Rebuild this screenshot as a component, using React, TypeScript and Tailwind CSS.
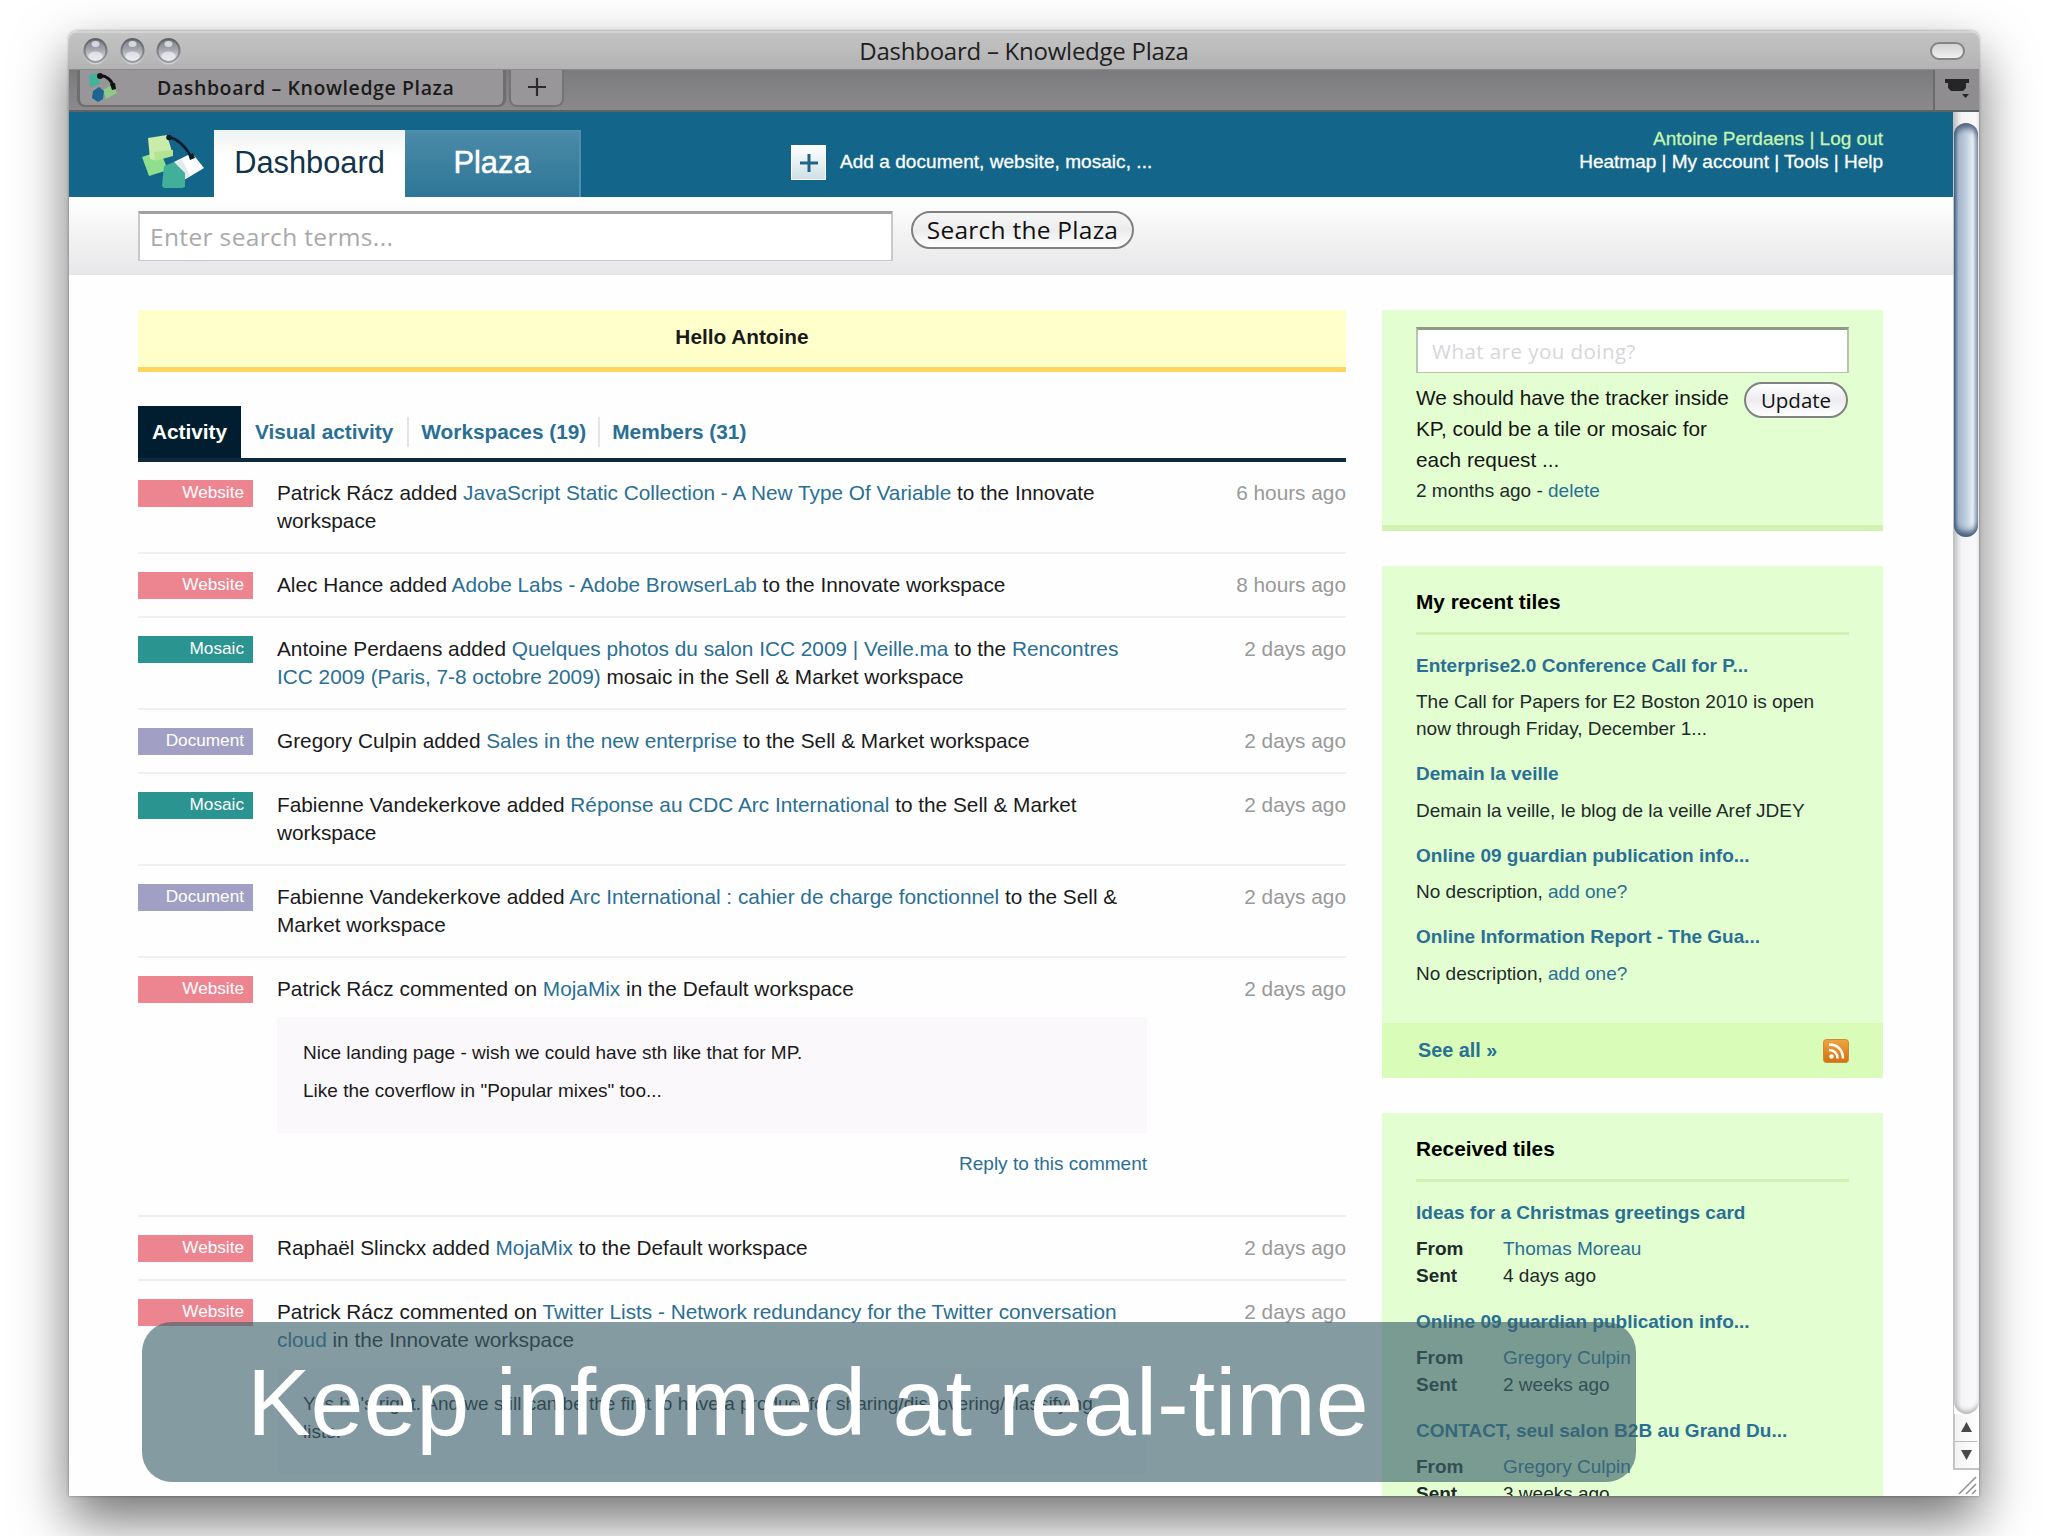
import type { ReactNode } from "react";

type Kind = "Website" | "Mosaic" | "Document";

const kindColors: Record<Kind, string> = {
  Website: "bg-[#ec8590]",
  Mosaic: "bg-[#2a9490]",
  Document: "bg-[#a19fc3]",
};

// Link in the main column and in the tiles
function A({ children }: { children: ReactNode }) {
  return <a className="text-[#2a6f94]">{children}</a>;
}

const activities: { kind: Kind; time: string; text: ReactNode; comment?: ReactNode; reply?: boolean }[] = [
  {
    kind: "Website",
    time: "6 hours ago",
    text: <>Patrick Rácz added <A>JavaScript Static Collection - A New Type Of Variable</A> to the Innovate workspace</>,
  },
  {
    kind: "Website",
    time: "8 hours ago",
    text: <>Alec Hance added <A>Adobe Labs - Adobe BrowserLab</A> to the Innovate workspace</>,
  },
  {
    kind: "Mosaic",
    time: "2 days ago",
    text: (
      <>
        Antoine Perdaens added <A>Quelques photos du salon ICC 2009 | Veille.ma</A> to the{" "}
        <A>Rencontres ICC 2009 (Paris, 7-8 octobre 2009)</A> mosaic in the Sell &amp; Market workspace
      </>
    ),
  },
  {
    kind: "Document",
    time: "2 days ago",
    text: <>Gregory Culpin added <A>Sales in the new enterprise</A> to the Sell &amp; Market workspace</>,
  },
  {
    kind: "Mosaic",
    time: "2 days ago",
    text: <>Fabienne Vandekerkove added <A>Réponse au CDC Arc International</A> to the Sell &amp; Market workspace</>,
  },
  {
    kind: "Document",
    time: "2 days ago",
    text: <>Fabienne Vandekerkove added <A>Arc International : cahier de charge fonctionnel</A> to the Sell &amp; Market workspace</>,
  },
  {
    kind: "Website",
    time: "2 days ago",
    text: <>Patrick Rácz commented on <A>MojaMix</A> in the Default workspace</>,
    comment: (
      <>
        <p>Nice landing page - wish we could have sth like that for MP.</p>
        <p className="mt-[10px]">Like the coverflow in "Popular mixes" too...</p>
      </>
    ),
    reply: true,
  },
  {
    kind: "Website",
    time: "2 days ago",
    text: <>Raphaël Slinckx added <A>MojaMix</A> to the Default workspace</>,
  },
  {
    kind: "Website",
    time: "2 days ago",
    text: <>Patrick Rácz commented on <A>Twitter Lists - Network redundancy for the Twitter conversation cloud</A> in the Innovate workspace</>,
    comment: <p>Yes he's right. And we still can be the first to have a product for sharing/discovering/classifying lists.</p>,
  },
];

const recentTiles = [
  { title: "Enterprise2.0 Conference Call for P...", body: "The Call for Papers for E2 Boston 2010 is open now through Friday, December 1..." },
  { title: "Demain la veille", body: "Demain la veille, le blog de la veille Aref JDEY" },
  { title: "Online 09 guardian publication info...", body: null },
  { title: "Online Information Report - The Gua...", body: null },
];

const receivedTiles = [
  { title: "Ideas for a Christmas greetings card", from: "Thomas Moreau", sent: "4 days ago" },
  { title: "Online 09 guardian publication info...", from: "Gregory Culpin", sent: "2 weeks ago" },
  { title: "CONTACT, seul salon B2B au Grand Du...", from: "Gregory Culpin", sent: "3 weeks ago" },
];

function Light() {
  return (
    <svg width="25" height="27" viewBox="0 0 25 27">
      <defs>
        <linearGradient id="light" x1="0" y1="0" x2="0" y2="1">
          <stop offset="0" stopColor="#777a82" />
          <stop offset="0.5" stopColor="#a9abb3" />
          <stop offset="1" stopColor="#eceef2" />
        </linearGradient>
        <linearGradient id="ring" x1="0" y1="0" x2="0" y2="1">
          <stop offset="0" stopColor="#5f6168" />
          <stop offset="1" stopColor="#9a9ca2" />
        </linearGradient>
      </defs>
      <ellipse cx="12.5" cy="14.5" rx="11.5" ry="12" fill="#d0d0d2" />
      <ellipse cx="12.5" cy="12.5" rx="11" ry="11.5" fill="url(#light)" stroke="url(#ring)" strokeWidth="2" />
      <ellipse cx="12.5" cy="6" rx="4" ry="3" fill="#e8e9ee" opacity="0.8" />
      <ellipse cx="12.5" cy="18" rx="7" ry="4.5" fill="#eef0f4" opacity="0.7" />
    </svg>
  );
}

function Favicon() {
  return (
    <svg width="30" height="29" viewBox="0 0 30 29">
      <path d="M1 2 9 0l3 11-10 3z" fill="#3fb39c" />
      <path d="m15 17 10-6 4 9-11 6z" fill="#8fc98a" />
      <path d="m5 18 6-4 5 4-1 8-5 3-6-4z" fill="#1c6590" />
      <path d="M11 3c7-1 13 4 15 12" fill="none" stroke="#111" strokeWidth="3" />
      <circle cx="12" cy="3" r="3" fill="#111" />
      <path d="m22 11 5-1 1 6-4 1z" fill="#111" />
    </svg>
  );
}

function Logo() {
  return (
    <svg width="62" height="56" viewBox="0 0 62 56">
      <path d="M0 22 18 16l8 19-19 6z" fill="#8ee08c" />
      <path d="m32 27 18-9 12 15-20 12z" fill="#fff" />
      <path d="m32 28 8-4 8 17-6 3z" fill="#e6e8ea" />
      <path d="m22 31 10-4 11 11v14l-3 1H22l-2-2z" fill="#42af9a" />
      <path d="m6 3 19-3 6 20-19 5-4-1z" fill="#c9ecab" />
      <path d="m12 17 19-2v6l-18 5z" fill="#b2e494" />
      <path d="M27 2c9 2 15 8 22 19" fill="none" stroke="#0b1d2a" strokeWidth="2.6" />
      <circle cx="27" cy="2.5" r="2.8" fill="#0b1d2a" />
      <path d="m46 19 5-1 2 5-5 2z" fill="#0b1d2a" />
    </svg>
  );
}

function Rss() {
  return (
    <svg width="26" height="24" viewBox="0 0 26 24">
      <defs>
        <linearGradient id="rss" x1="0" y1="0" x2="0" y2="1">
          <stop offset="0" stopColor="#f0a440" />
          <stop offset="1" stopColor="#d4700f" />
        </linearGradient>
      </defs>
      <rect x="0.5" y="0.5" width="25" height="23" rx="3" fill="url(#rss)" stroke="#c98a3c" />
      <circle cx="8.5" cy="17.5" r="2.2" fill="#fff" />
      <path d="M6 11c5 0 8.500 3.500 8.500 8.500M6 5.500c8.500 0 14 5.500 14 14" fill="none" stroke="#fff" strokeWidth="2.6" />
    </svg>
  );
}

function TitleBar() {
  return (
    <div className="flex h-[39px] items-center justify-between rounded-t-lg border-t-2 border-[#d4d4d4] bg-linear-to-b from-[#c3c3c3] to-[#b3b3b3] pr-[14px] pb-px pl-[14px] shadow-[inset_0_-1px_0_#8a8a8a]">
      <div className="flex w-[150px] gap-[11.5px]">
        <Light />
        <Light />
        <Light />
      </div>
      <div className="pb-px font-['Open_Sans',sans-serif] text-[24px] leading-[34px] font-medium tracking-[-0.25px] text-[#1f1f1f]">Dashboard – Knowledge Plaza</div>
      <div className="flex w-[150px] justify-end">
        <div className="h-[18px] w-[35px] rounded-full border-2 border-[#858585] bg-linear-to-b from-[#d2d2d2] to-[#f0f0f0]" />
      </div>
    </div>
  );
}

function TabBar() {
  return (
    <div className="flex h-[42px] items-start border-b-2 border-[#5d6468] bg-linear-to-b from-[#7b7b7d] to-[#8b898b] pl-2">
      <div className="flex h-[37px] w-[429px] items-center rounded-b-lg border-x-3 border-b-2 border-[#6f6d6f] bg-[#989698] pl-2">
        <Favicon />
        <span className="ml-[39px] font-['Open_Sans',sans-serif] text-[19.5px] leading-[34px] font-semibold tracking-[0.6px] text-[#1b1b1b]">Dashboard – Knowledge Plaza</span>
      </div>
      <div className="ml-[3px] flex h-[37px] w-[55px] items-center justify-center rounded-b-lg border-x-2 border-b-2 border-[#757375] bg-[#989698] pb-[2px]">
        <svg width="18" height="18" viewBox="0 0 18 18">
          <path d="M9 0v18M0 9h18" stroke="#2b2b2b" strokeWidth="2.2" />
        </svg>
      </div>
      <div className="ml-auto flex h-10 w-[46px] items-center justify-center border-l-2 border-[#6c6a6c] bg-[#8f8d8f] pb-[3px]">
        <svg width="26" height="22" viewBox="0 0 26 22">
          <path d="M1 1h24v4h-3v5l-3 3H7l-3-3V5H1z" fill="#252528" />
          <path d="M18 16h7l-3.500 4z" fill="#252528" />
        </svg>
      </div>
    </div>
  );
}

function Header() {
  return (
    <div className="flex h-[85px] items-start bg-[#13668a] pr-[70px] text-[19px] text-white">
      <div className="mt-[23px] ml-[73px] w-[72px]">
        <Logo />
      </div>
      <div className="mt-[18px] flex h-[67px] w-[191px] items-center justify-center bg-linear-to-b from-[#eef2f2] to-white to-40% text-[30.8px] text-[#123348]">Dashboard</div>
      <div className="mt-[18px] flex h-[67px] w-[176px] items-center justify-center border-t-2 border-r-2 border-[#4f90ae] bg-linear-to-b from-[#4b8aa8] to-[#2c7697] pb-[2px] text-[30.8px] [-webkit-text-stroke:0.5px_white]">Plaza</div>
      <div className="mt-[33px] ml-[210px] flex items-center">
        <div className="flex h-[35px] w-[35px] items-center justify-center border border-white bg-linear-to-b from-white to-[#cfe0e8]">
          <svg width="18" height="18" viewBox="0 0 18 18">
            <path d="M9 0v18M0 9h18" stroke="#1f6488" strokeWidth="3" />
          </svg>
        </div>
        <span className="ml-[14px] tracking-[0.05px] [-webkit-text-stroke:0.3px_white]">Add a document, website, mosaic, ...</span>
      </div>
      <div className="mt-[16px] ml-auto text-right leading-[22.5px]">
        <div className="text-[#c4f5b0] [-webkit-text-stroke:0.3px_#c4f5b0]">Antoine Perdaens | Log out</div>
        <div className="[-webkit-text-stroke:0.3px_white]">Heatmap | My account | Tools | Help</div>
      </div>
    </div>
  );
}

function SearchBar() {
  return (
    <div className="flex h-[78px] items-start bg-linear-to-b from-white to-[#e7e6e8] pt-[14px] pl-[69px] font-['Open_Sans',sans-serif]">
      <div className="flex h-[50px] w-[755px] items-center border-x-2 border-t-3 border-b border-[#c9c9cb] border-t-[#a0a0a0] bg-white pl-[10px] text-[24.5px] font-medium tracking-[0.35px] text-[#a9a9ab]">Enter search terms...</div>
      <button className="ml-[18px] h-[38px] w-[223px] rounded-full border-2 border-[#808080] bg-linear-to-b from-[#f7f7f7] via-[#ececee] to-white text-[24.5px] leading-[32px] font-medium tracking-[0.25px] whitespace-nowrap text-[#111]">
        Search the Plaza
      </button>
    </div>
  );
}

function Activity() {
  return (
    <div className="w-[1208px] shrink-0">
      <div className="flex h-[62px] items-center justify-center border-b-[5px] border-[#ffd45f] bg-[#ffffcb] pb-1 font-bold">Hello Antoine</div>
      <div className="mt-[34px] flex h-[56px] items-center border-b-4 border-[#0b2a3d] font-bold text-[#2a6f94]">
        <div className="flex h-[52px] w-[103px] items-center justify-center bg-[#001e30] text-white">Activity</div>
        <div className="ml-[14px] h-[30px] border-r-2 border-[#e6e4ea] pr-[14px] leading-[30px]">Visual activity</div>
        <div className="h-[30px] border-r-2 border-[#e6e4ea] px-[12px] leading-[30px]">Workspaces (19)</div>
        <div className="pl-[12px] leading-[30px]">Members (31)</div>
      </div>
      {activities.map((a, i) => (
        <div key={i} className="flex items-start border-b-2 border-[#f1eff4] py-[17px] last:border-b-0">
          <div className={`${kindColors[a.kind]} mt-px h-[27px] w-[115px] shrink-0 pr-[9px] text-right text-[17.2px] leading-[25px] text-white`}>{a.kind}</div>
          <div className="ml-6 w-[870px] shrink-0">
            <p>{a.text}</p>
            {a.comment && <div className="mt-[14px] bg-[#faf8fb] px-[26px] pt-[22px] pb-[28px] text-[19px]">{a.comment}</div>}
            {a.reply && (
              <p className="mt-[17px] mb-[20px] text-right text-[19px]">
                <A>Reply to this comment</A>
              </p>
            )}
          </div>
          <div className="ml-auto whitespace-nowrap text-[#999]">{a.time}</div>
        </div>
      ))}
    </div>
  );
}

function PanelTitle({ children }: { children: ReactNode }) {
  return <h2 className="border-b-3 border-[#d0f2b4] pt-[22px] pb-[16px] font-bold text-black">{children}</h2>;
}

function Sidebar() {
  return (
    <div className="ml-9 w-[501px] shrink-0 text-[19px] leading-[27px] text-[#1d2b2b]">
      <div className="h-[221px] border-b-6 border-[#d2f2b2] bg-[#e3fed1] px-[34px] pt-[17px]">
        <div className="flex h-[46px] items-center border-x-2 border-t-3 border-b border-[#b9c4ae] border-t-[#8d9a84] bg-white pl-[14px] font-['Open_Sans',sans-serif] text-[20.5px] tracking-[0.45px] text-[#d8d5da]">What are you doing?</div>
        <div className="flex items-start justify-between pt-[9px]">
          <p className="mt-px w-[320px] text-[20.8px] leading-[30.8px] text-[#151515]">We should have the tracker inside KP, could be a tile or mosaic for each request ...</p>
          <button className="mr-px h-[36px] w-[104px] rounded-full border-2 border-[#7f8280] bg-linear-to-b from-white via-[#ececf0] to-white font-['Open_Sans',sans-serif] text-[20.5px] leading-[29px] font-medium text-[#111]">Update</button>
        </div>
        <p className="mt-[2px]">2 months ago - <A>delete</A></p>
      </div>

      <div className="mt-[35px] bg-[#e3fed1]">
        <div className="h-[457px] px-[34px]">
          <div className="text-[20.8px] leading-7"><PanelTitle>My recent tiles</PanelTitle></div>
          {recentTiles.map((t) => (
            <div key={t.title} className="mt-[16.5px] mb-[18px]">
              <h3 className="font-bold"><A>{t.title}</A></h3>
              <p className="mt-[9.5px] w-[415px]">{t.body ?? <>No description, <A>add one?</A></>}</p>
            </div>
          ))}
        </div>
        <div className="flex h-[55px] items-center justify-between bg-[#d9fdb8] pr-[34px] pl-[36px]">
          <span className="text-[19.8px] font-bold"><A>See all »</A></span>
          <Rss />
        </div>
      </div>

      <div className="mt-[35px] h-[420px] bg-[#e3fed1] px-[34px]">
        <div className="text-[20.8px] leading-7"><PanelTitle>Received tiles</PanelTitle></div>
        {receivedTiles.map((t) => (
          <div key={t.title} className="mt-[16.5px] mb-[18px] leading-[27.5px]">
            <h3 className="mb-[8.5px] font-bold"><A>{t.title}</A></h3>
            <div className="flex">
              <b className="w-[87px]">From</b>
              <A>{t.from}</A>
            </div>
            <div className="flex">
              <b className="w-[87px]">Sent</b>
              <span>{t.sent}</span>
            </div>
          </div>
        ))}
      </div>
    </div>
  );
}

function Scrollbar() {
  return (
    <div className="flex w-[26px] shrink-0 flex-col bg-white">
      <div className="border-l border-[#c4c4c6]">
        <div className="flex h-[1302px] flex-col rounded-b-full bg-linear-to-r from-[#c6c6c8] via-[#f4f4f6] via-30% to-[#fbf9fb] pt-[11px] pr-px shadow-[inset_0_-4px_4px_-1px_#b5b5b5]">
          <div className="h-[414px] rounded-full bg-[linear-gradient(90deg,#3f6486_0%,#a5b5ca_18%,#bfcedf_50%,#e6eef6_78%,#8d9fb5_100%)] shadow-[inset_0_8px_6px_-3px_#4c5f7c,inset_0_-8px_6px_-3px_#40597a]" />
        </div>
      </div>
      <div className="flex h-[56px] flex-col items-center justify-between border-b-2 border-l-2 border-[#c4c4c6] bg-linear-to-r from-[#f3f3f5] to-white pt-2 pr-[2px] pb-2">
        <svg width="11" height="10" viewBox="0 0 11 10"><path d="m5.500 0 5.500 10H0z" fill="#484848" /></svg>
        <div className="h-px w-full bg-[#bbb]" />
        <svg width="11" height="10" viewBox="0 0 11 10"><path d="M5.500 10 0 0h11z" fill="#484848" /></svg>
      </div>
      <svg className="mt-[5px] ml-1" width="20" height="20" viewBox="0 0 20 20">
        <path d="M2 19 19 2M9 19 19 9M15 19l4-4" stroke="#8f8f8f" strokeWidth="1.5" />
      </svg>
    </div>
  );
}

export default function App() {
  return (
    <div className="relative h-[1536px] w-[2048px] overflow-hidden bg-white pt-[31px] pl-[69px] font-['Liberation_Sans',Arial,sans-serif]">
      <div className="flex h-[1465px] w-[1910px] flex-col overflow-hidden rounded-t-lg shadow-[0_24px_54px_rgba(0,0,0,0.56),0_0_3px_rgba(0,0,0,0.4)]">
        <TitleBar />
        <TabBar />
        <div className="flex min-h-0 flex-1">
          <div className="flex w-[1884px] flex-col overflow-hidden bg-[#fefefe]">
            <Header />
            <SearchBar />
            <div className="flex h-[1221px] shrink-0 items-start overflow-hidden pt-[35px] pl-[69px] text-[20.8px] leading-7 text-[#1a1a1a]">
              <Activity />
              <Sidebar />
            </div>
          </div>
          <Scrollbar />
        </div>
      </div>

      {/* Caption over the window */}
      <div className="absolute top-[1322px] left-[142px] flex h-[160px] w-[1494px] items-center rounded-[30px] bg-[rgba(63,99,110,0.64)] pt-[2px] pl-[105px] text-[95.2px] leading-none text-white">
        Keep informed at real-time
      </div>
    </div>
  );
}
